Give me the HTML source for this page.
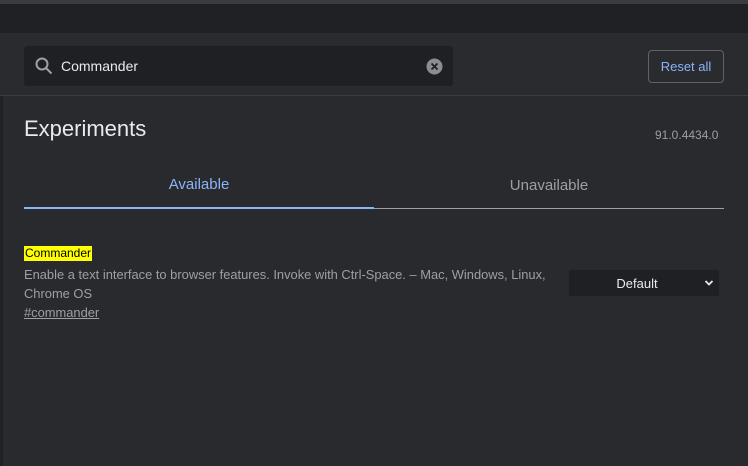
<!DOCTYPE html>
<html><head><style>
body{margin:0;width:748px;height:466px;background:#292a2d;font-family:"Liberation Sans",sans-serif;position:relative;overflow:hidden}
.a{position:absolute}
</style></head><body>
<div class="a" style="left:0;top:0;width:748px;height:4px;background:#3a3b3e"></div>
<div class="a" style="left:0;top:4px;width:748px;height:29px;background:#202124"></div>
<div class="a" style="left:0;top:33px;width:748px;height:62px;background:#2a2b2e"></div>
<div class="a" style="left:0;top:95px;width:748px;height:1px;background:#3c3d40"></div>
<div class="a" style="left:0;top:96px;width:3px;height:370px;background:#202124"></div>
<div class="a" style="left:24px;top:46px;width:429px;height:40px;background:#1f2023;border-radius:3px"></div>
<svg class="a" style="left:34px;top:56px" width="20" height="20" viewBox="0 0 20 20"><circle cx="8" cy="8" r="5.5" fill="none" stroke="#9aa0a6" stroke-width="2"/><path d="M12 12l5.5 5.5" stroke="#9aa0a6" stroke-width="2"/></svg>
<div class="a" style="left:61px;top:58px;font-size:14px;color:#e8eaed">Commander</div>
<svg class="a" style="left:426px;top:58px" width="17" height="17" viewBox="0 0 17 17"><circle cx="8.5" cy="8.5" r="8" fill="#8a8d91"/><path d="M5.5 5.5l6 6M11.5 5.5l-6 6" stroke="#1f2023" stroke-width="1.8"/></svg>
<div class="a" style="left:648px;top:50px;width:74px;height:31px;border:1px solid #5f6368;border-radius:4px;color:#8ab4f8;font-size:13px;text-align:center;line-height:31px">Reset all</div>
<div class="a" style="left:24px;top:116px;font-size:22px;color:#e8eaed">Experiments</div>
<div class="a" style="left:655px;top:128px;font-size:12px;color:#9aa0a6">91.0.4434.0</div>
<div class="a" style="left:24px;top:176px;width:350px;text-align:center;font-size:15px;color:#8ab4f8">Available</div>
<div class="a" style="left:374px;top:177px;width:350px;text-align:center;font-size:15px;color:#9aa0a6">Unavailable</div>
<div class="a" style="left:24px;top:208px;width:700px;height:1px;background:#9aa0a6"></div>
<div class="a" style="left:24px;top:207px;width:350px;height:2px;background:#8ab4f8"></div>
<div class="a" style="left:24px;top:246px;height:15px;padding:0 1px;background:#ffff00;color:#000;font-size:12px;line-height:15px">Commander</div>
<div class="a" style="left:24px;top:265px;width:545px;font-size:12.9px;line-height:19px;color:#9aa0a6">Enable a text interface to browser features. Invoke with Ctrl-Space. – Mac, Windows, Linux,<br>Chrome OS</div>
<div class="a" style="left:24px;top:305px;font-size:12.9px;color:#9aa0a6;text-decoration:underline">#commander</div>
<div class="a" style="left:569px;top:270px;width:150px;height:26px;background:#1f2023"></div>
<div class="a" style="left:569px;top:276px;width:136px;text-align:center;font-size:13px;color:#e8eaed">Default</div>
<svg class="a" style="left:704px;top:279px" width="10" height="8" viewBox="0 0 10 8"><path d="M1.5 2l3.5 3.5L8.5 2" fill="none" stroke="#e8eaed" stroke-width="1.8"/></svg>
</body></html>
